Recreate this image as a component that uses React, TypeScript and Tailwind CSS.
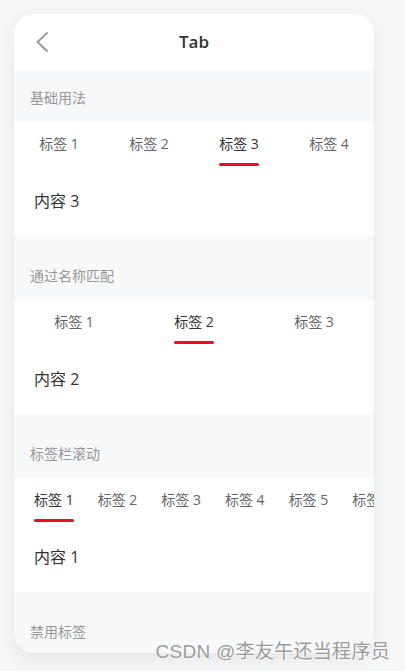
import React, { useState } from 'react';

const FONT = '"Open Sans", "Noto Sans CJK SC", sans-serif';

const Title: React.FC<{ text: string; first?: boolean }> = ({ text, first }) => (
    <div className={`px-4 ${first ? 'pt-5' : 'pt-8'} pb-4 text-[14px] leading-4 text-[#969799]`}>{text}</div>
);

const Tabs: React.FC<{ labels: string[]; initial: number; scroll?: boolean }> = ({ labels, initial, scroll }) => {
    const [active, setActive] = useState(initial);
    return (
        <div className="bg-white">
            <div className={`flex h-11 overflow-hidden ${scroll ? 'pl-2' : ''}`}>
                {labels.map((l, i) => (
                    <button
                        key={l}
                        onClick={() => setActive(i)}
                        className={`relative flex items-center justify-center text-[14px] leading-5 whitespace-nowrap ${scroll ? 'px-3 shrink-0' : 'flex-1'} ${i === active ? 'text-[#323233]' : 'text-[#646566]'}`}
                    >
                        {l}
                        {i === active && (
                            <span className="absolute bottom-0 left-1/2 -translate-x-1/2 w-10 h-[3px] rounded-full bg-[#ee0a24]" />
                        )}
                    </button>
                ))}
            </div>
            <div className="px-5 py-6 text-[16px] leading-[22px] text-[#323233]">内容 {active + 1}</div>
        </div>
    );
};

export default function App() {
    return (
        <div className="relative w-[405px] h-[671px] overflow-hidden bg-[#f5f6f8] pt-[14px] pl-[14px]" style={{ fontFamily: FONT }}>
            <div className="w-[360px] h-[639px] rounded-[20px] overflow-hidden bg-[#f7f8fa] shadow-[0_6px_14px_rgba(100,101,102,0.1)]">
                {/* Nav bar */}
                <div className="relative h-14 bg-white flex items-center justify-center">
                    <svg className="absolute left-[22px] top-[18px]" width="12" height="20" viewBox="0 0 12 20" fill="none">
                        <path d="M11 1 L1.5 10 L11 19" stroke="#969799" strokeWidth="1.8" strokeLinecap="round" strokeLinejoin="round" />
                    </svg>
                    <span className="text-[17px] font-semibold text-[#323233]">Tab</span>
                </div>

                <Title text="基础用法" first />
                <Tabs labels={['标签 1', '标签 2', '标签 3', '标签 4']} initial={2} />

                <Title text="通过名称匹配" />
                <Tabs labels={['标签 1', '标签 2', '标签 3']} initial={1} />

                <Title text="标签栏滚动" />
                <Tabs labels={['标签 1', '标签 2', '标签 3', '标签 4', '标签 5', '标签 6', '标签 7', '标签 8']} initial={0} scroll />

                <Title text="禁用标签" />
            </div>

            {/* Watermark */}
            <div
                className="absolute right-[15px] top-[640px] text-[19px] leading-6 text-[#9a9a9a] tracking-[0.3px]"
                style={{ fontFamily: '"Liberation Sans", "Noto Sans CJK SC", sans-serif', textShadow: '0 0 2px #fff, 0 0 2px #fff' }}
            >
                CSDN @李友午还当程序员
            </div>
        </div>
    );
}
